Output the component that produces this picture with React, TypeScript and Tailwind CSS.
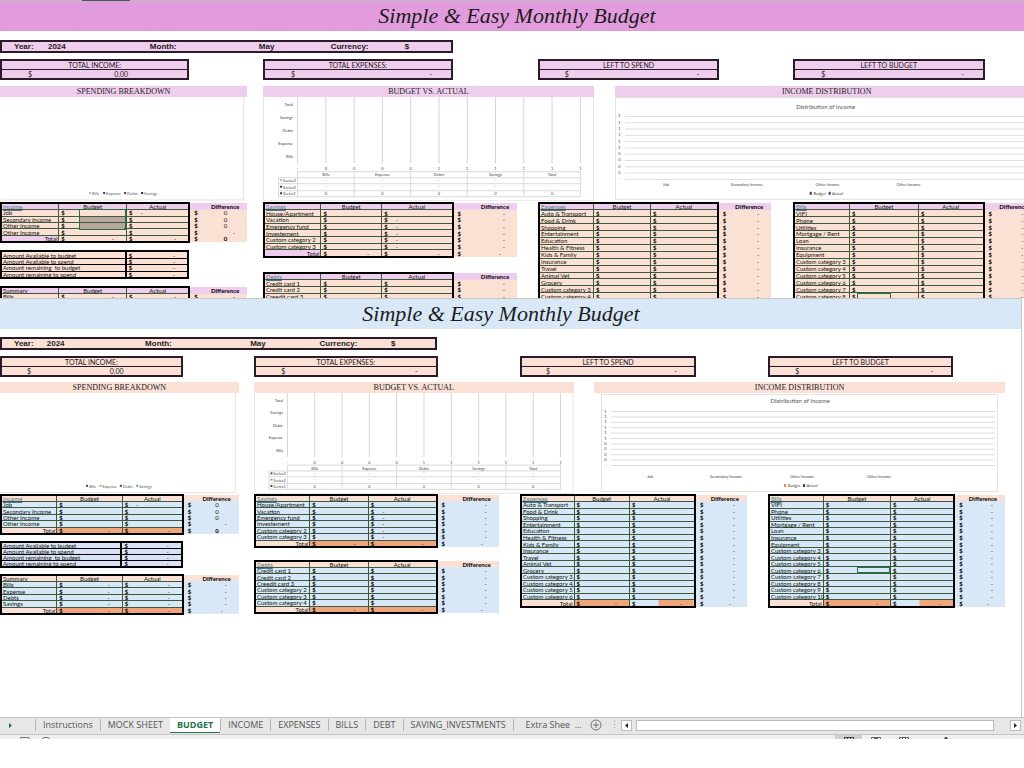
import { Fragment } from "react";
import clsx from "clsx";

type Theme = {
  head: string;
  body: string;
  diff: string;
  total: string;
  split: string;
  amount: string;
  dots: string[];
};

type Row = {
  name: string;
  budget?: string;
  actual?: string;
  left?: string;
  diff?: string;
};

const pink: Theme = {
  head: "bg-[#efcdec]",
  body: "bg-[#fbe1d4]",
  diff: "bg-[#fbe1d4]",
  total: "bg-[#fbe1d4]",
  split: "bg-[#fbe1d4]",
  amount: "bg-[#fbe1d4]",
  dots: ["#c9a3c8", "#5b2a5b", "#5b2a5b", "#2b1a3b"],
};

const blue: Theme = {
  head: "bg-[#fbe0d6]",
  body: "bg-[#d9e8f6]",
  diff: "bg-[#d9e8f6]",
  total: "bg-[#f0a67d]",
  split: "bg-[linear-gradient(90deg,#d9e8f6_45%,#f0a67d_45%)]",
  amount: "bg-[#d8e2f4]",
  dots: ["#1d5c4a", "#e08a50", "#1d4a5c", "#3a9ad0"],
};

const names = (list: string[]): Row[] => list.map((name) => ({ name }));

const income: Row[] = [
  { name: "Job", left: "-", diff: "0" },
  { name: "Secondary Income", diff: "0" },
  { name: "Other Income", diff: "0" },
  { name: "Other Income" },
];
const summary: Row[] = ["Bills", "Expense", "Debts", "Savings"].map((name) => ({ name, budget: "-", actual: "-" }));
const savings: Row[] = ["House/Apartment", "Vacation", "Emergency fund", "Investement", "Custom category 2", "Custom category 3"].map(
  (name, i) => ({ name, left: i > 0 ? "-" : "" })
);
const debts = names(["Credit card 1", "Credit card 2", "Creedit card 3", "Custom category 2", "Custom category 3", "Custom category 4"]);
const expenses = names([
  "Auto & Transport", "Food & Drink", "Shopping", "Entertainment", "Education", "Health & Fitness", "Kids & Family", "Insurance",
  "Travel", "Animal Vet", "Grocery", "Custom category 3", "Custom category 4", "Custom category 5", "Custom category 6",
]);
const bills = names([
  "VIFI", "Phone", "Utilities", "Mortgage / Rent", "Loan", "Insurance", "Equipment", "Custom category 3", "Custom category 4",
  "Custom category 5", "Custom category 6", "Custom category 7", "Custom category 8", "Custom category 9", "Custom category 10",
]);

const cols = {
  income: ["w-[23.5%]", "w-[27.5%]", "w-[25.5%]", "w-[23.5%]"],
  savings: ["w-[22.5%]", "w-[24%]", "w-[28%]", "w-[25.5%]"],
  expenses: ["w-[23.5%]", "w-[24.5%]", "w-[29%]", "w-[23%]"],
  bills: ["w-[23%]", "w-[28.5%]", "w-[27%]", "w-[21.5%]"],
};

const cell = "border border-[#3c5a40] p-0 whitespace-nowrap";

function Money({ value = "", left = "", className = "pl-0.5 pr-3" }: { value?: string; left?: string; className?: string }) {
  return (
    <div className={clsx("flex", className)}>
      <span className="font-black">$</span>
      {left && <span className="pl-2">{left}</span>}
      <span className="ml-auto">{value}</span>
    </div>
  );
}

// cursor: index of the row that carries the selection frame
function BudgetTable({
  title, rows, col, theme, height, link = true, split = false, total = "-", range = false, cursor = -1, open = false,
}: {
  title: string; rows: Row[]; col: string[]; theme: Theme; height: string;
  link?: boolean; split?: boolean; total?: string; range?: boolean; cursor?: number; open?: boolean;
}) {
  return (
    <table className={clsx("w-full table-fixed border-collapse text-[6px] leading-[5px] text-[#111]", height)}>
      <colgroup>
        {col.map((w, i) => <col key={i} className={w} />)}
      </colgroup>
      <thead>
        <tr className={theme.head}>
          <th className={clsx(cell, "border-t-2 border-l-2 border-t-black border-l-black text-left font-normal")}>
            {link ? <a href="#" className="pl-px text-[#4a7a8c] underline">{title}</a> : <span className="pl-px">{title}</span>}
          </th>
          <th className={clsx(cell, "border-t-2 border-t-black font-normal")}>Budget</th>
          <th className={clsx(cell, "border-t-2 border-r-2 border-t-black border-r-black font-normal")}>Actual</th>
          <th className="p-0 font-black"><div className="pr-2 text-right">Difference</div></th>
        </tr>
      </thead>
      <tbody>
        {rows.map((r, i) => (
          <tr key={i}>
            <td className={clsx(cell, theme.body, "border-l-2 border-l-black pl-px")}>{r.name}</td>
            <td className={clsx(cell, theme.body, i === cursor && "relative z-10")}>
              <Money value={r.budget} />
              {i === cursor && range && (
                <div className="absolute -top-px right-0 h-[21px] w-[70%] border border-[#217346] bg-[#fbe1d4]">
                  <div className="mt-[6px] h-[13px] border-t border-[#3c5a40] bg-[#b9a79c]">
                    <div className="h-[6px] border-b border-[#3c5a40]" />
                  </div>
                  <div className="absolute -right-px -bottom-px size-[2px] bg-[#217346]" />
                </div>
              )}
              {i === cursor && !range && (
                <div className={clsx("absolute inset-y-0 w-1/2 border border-[#217346]", open ? "left-[10%]" : "right-0")} />
              )}
            </td>
            <td className={clsx(cell, theme.body, "border-r-2 border-r-black")}><Money value={r.actual} left={r.left} /></td>
            <td className={clsx("p-0", theme.diff)}>
              <Money value={r.diff ?? "-"} className={r.diff ? "pl-1 pr-5" : "pl-1 pr-3"} />
            </td>
          </tr>
        ))}
        {!open && (
          <tr>
            <td className={clsx(cell, theme.head, "border-b-2 border-l-2 border-b-black border-l-black pr-px text-right")}>Total</td>
            <td className={clsx(cell, theme.total, "border-b-2 border-b-black")}><Money value="-" /></td>
            <td className={clsx(cell, "border-r-2 border-b-2 border-r-black border-b-black", split ? theme.split : theme.total)}>
              <Money value="-" />
            </td>
            <td className={clsx("p-0", theme.diff)}>
              <Money value={total} className={total === "0" ? "pl-1 pr-5 font-black" : "pl-1 pr-4"} />
            </td>
          </tr>
        )}
      </tbody>
    </table>
  );
}

function AmountTable({ theme, height }: { theme: Theme; height: string }) {
  return (
    <table className={clsx("w-[76.5%] table-fixed border-collapse border-2 border-black text-[6px] leading-[5px] text-[#111]", height, theme.amount)}>
      <tbody>
        {["Amount Available to budget", "Amount Available to spend", "Amount remaining  to budget", "Amount remaining to spend"].map((t) => (
          <tr key={t}>
            <td className="w-2/3 border border-r-2 border-black p-0 pl-px whitespace-pre">{t}</td>
            <td className="border border-black p-0"><Money value="-" /></td>
          </tr>
        ))}
      </tbody>
    </table>
  );
}

function TotalBox({ label, value, theme, className }: { label: string; value: string; theme: Theme; className: string }) {
  return (
    <div className={clsx("min-w-0 border-2 border-[#2a1a2a] font-[Lato,sans-serif] text-[7px] leading-[8px] text-[#222]", theme.head, className)}>
      <div className="border-b border-[#2a1a2a] text-center">{label}</div>
      <div className={clsx("flex justify-between pl-[14%]", value === "-" ? "pr-[10%]" : "pr-[32%]")}>
        <span>$</span>
        <span>{value}</span>
      </div>
    </div>
  );
}

function SectionTitle({ children, theme }: { children: string; theme: Theme }) {
  return (
    <h2 className={clsx("text-center font-['Liberation_Serif',serif] text-[8px] leading-[11px] text-[#222]", theme.head)}>{children}</h2>
  );
}

function SpendingChart({ theme, h }: { theme: Theme; h: number }) {
  return (
    <svg viewBox={`0 0 247 ${h}`} className="block w-full" fontSize="4" fill="#555">
      <path d={`M243.500 0V${h - 1}H0`} fill="none" stroke="#e2e2e2" />
      {["Bills", "Expense", "Debts", "Savings"].map((t, i) => (
        <g key={t}>
          <rect x={[89, 103, 124, 141][i]} y={h - 9} width="2" height="2" fill={theme.dots[i]} />
          <text x={[92, 106, 127, 144][i]} y={h - 6}>{t}</text>
        </g>
      ))}
    </svg>
  );
}

function BudgetChart({ theme }: { theme: Theme }) {
  const ticks = ["-", "0", "0", "0", "0", "1", "1", "1", "1", "1", "1"];
  const groups = ["Bills", "Expense", "Debts", "Savings", "Total"];
  return (
    <svg viewBox="0 0 330 104" className="block w-full" fontSize="4" fill="#444" textAnchor="middle">
      <path d="M.5 0V103.500H329.500V0" fill="none" stroke="#e6e6e6" />
      {ticks.map((t, i) => (
        <Fragment key={i}>
          <path d={`M${34.5 + i * 28.2} 0V66`} stroke="#d4d4d4" />
          <text x={34.5 + i * 28.2} y="73">{t}</text>
        </Fragment>
      ))}
      {[...groups].reverse().map((t, i) => (
        <text key={t} x="30" y={9 + i * 13} textAnchor="end">{t}</text>
      ))}
      <path d="M34.500 74.500H316.500M15.500 80.500H316.500M15.500 86.500H316.500M15.500 93.500H316.500M15.500 99.500H316.500M15.500 80.500V99.500" fill="none" stroke="#d9d9d9" />
      {[0, 1, 2, 3, 4, 5].map((i) => <path key={i} d={`M${34.5 + i * 56.4} 74V99.500`} stroke="#d9d9d9" />)}
      {groups.map((t, i) => (
        <Fragment key={t}>
          <text x={62.7 + i * 56.4} y="79">{t}</text>
          <text x={62.7 + i * 56.4} y="85">-</text>
          <text x={62.7 + i * 56.4} y="91">-</text>
          <text x={62.7 + i * 56.4} y="98">0</text>
        </Fragment>
      ))}
      {["Series3", "Series2", "Series1"].map((t, i) => (
        <Fragment key={t}>
          <rect x="17" y={82 + i * 6.5} width="2" height="2" fill={theme.dots[i]} />
          <text x="20" y={85 + i * 6.5} textAnchor="start">{t}</text>
        </Fragment>
      ))}
    </svg>
  );
}

type Plot = { w: number; h: number; title: number; top: number; step: number; label: number; legend: number; cats: number[]; mid: number };

function IncomeChart({ theme, plot }: { theme: Theme; plot: Plot }) {
  const marks = ["1", "1", "1", "1", "1", "1", "0", "0", "0", "0", "-"];
  return (
    <svg viewBox={`0 0 ${plot.w} ${plot.h}`} className="block w-full" fontSize="4" fill="#444" textAnchor="middle">
      <rect x=".5" y=".5" width={plot.w - 1} height={plot.h - 1} fill="none" stroke="#e2e2e2" />
      <text x={plot.mid} y={plot.title} fontSize="6" fill="#555">Distribution of Income</text>
      {marks.map((m, i) => (
        <Fragment key={i}>
          <path d={`M10 ${plot.top + i * plot.step}H${plot.w - 3}`} stroke="#dedede" />
          <text x="4.500" y={plot.top + 1 + i * plot.step}>{m}</text>
        </Fragment>
      ))}
      {["Job", "Secondary Income", "Other Income", "Other Income"].map((t, i) => (
        <text key={i} x={plot.cats[i]} y={plot.label}>{t}</text>
      ))}
      <rect x={plot.mid - 16} y={plot.legend - 3} width="2" height="3" fill={theme.dots[1]} />
      <text x={plot.mid - 6} y={plot.legend}>Budget</text>
      <rect x={plot.mid + 3} y={plot.legend - 3} width="2" height="3" fill={theme.dots[2]} />
      <text x={plot.mid + 12} y={plot.legend}>Actual</text>
    </svg>
  );
}

function YearBar({ theme, className }: { theme: Theme; className: string }) {
  return (
    <div
      className={clsx(
        "grid grid-cols-[34fr_102fr_109fr_72fr_74fr_46fr] border-2 border-[#2a1a2a] pl-3 font-['Liberation_Sans',sans-serif] text-[8px] leading-[9px] font-bold text-[#1c1c1c]",
        theme.head,
        className
      )}
    >
      {["Year:", "2024", "Month:", "May", "Currency:", "$"].map((t) => <span key={t}>{t}</span>)}
    </div>
  );
}

function SheetTabs() {
  const tabs = ["Instructions", "MOCK SHEET", "BUDGET", "INCOME", "EXPENSES", "BILLS", "DEBT", "SAVING_INVESTMENTS"];
  return (
    <div>
      <nav className="flex h-[18px] items-center border-y border-[#c4c4c4] bg-[#e7e7e7] pb-px font-['Open_Sans',sans-serif] text-[9px] leading-3 text-[#555]">
        <button aria-label="Next sheets" className="flex w-[35px] pl-[9px]">
          <svg viewBox="0 0 3 5" className="h-[5px] w-[3px]" fill="#1b7045"><path d="M0 0L3 2.500L0 5Z" /></svg>
        </button>
        {tabs.map((t) => (
          <button
            key={t}
            className={clsx(
              "px-[7px] whitespace-nowrap",
              t === "BUDGET" ? "h-[15px] border-b border-[#217346] bg-white font-bold text-[#217346]" : "border-l border-[#b5b5b5]"
            )}
          >
            {t}
          </button>
        ))}
        <button className="border-l border-[#b5b5b5] pr-2 pl-3 whitespace-nowrap">Extra Shee&nbsp; ...</button>
        <button aria-label="New sheet" className="mr-2">
          <svg viewBox="0 0 12 12" className="size-3" fill="none" stroke="#777"><circle cx="6" cy="6" r="5" /><path d="M6 3V9M3 6H9" /></svg>
        </button>
        <span className="mr-0.5 text-[#999]">⋮</span>
        <button aria-label="Scroll left" className="mr-1 flex size-[11px] items-center justify-center border border-[#bbb] bg-white">
          <svg viewBox="0 0 3 5" className="h-[5px] w-[3px]" fill="#222"><path d="M3 0L0 2.500L3 5Z" /></svg>
        </button>
        <div className="mr-4 h-[11px] grow border border-[#bbb] bg-white" />
        <button aria-label="Scroll right" className="mr-[3px] flex size-[11px] items-center justify-center border border-[#bbb] bg-white">
          <svg viewBox="0 0 3 5" className="h-[5px] w-[3px]" fill="#222"><path d="M0 0L3 2.500L0 5Z" /></svg>
        </button>
      </nav>
      <div className="flex h-1 items-end bg-[#f1f0ef] pr-[76px] pl-5">
        <svg viewBox="0 0 32 2" className="h-[2px] w-8" fill="none" stroke="#777"><path d="M0 2V.5H9V2M22 2L24 .5H28L30 2" /></svg>
        <div className="ml-auto flex h-1 w-[27px] items-end justify-center bg-[#cfcfcf]">
          <svg viewBox="0 0 10 2" className="h-[2px] w-[10px]" stroke="#444"><path d="M0 .5H10M.5 0V2M3.500 0V2M6.500 0V2M9.500 0V2" /></svg>
        </div>
        <svg viewBox="0 0 10 2" className="ml-[9px] h-[2px] w-[10px]" fill="none" stroke="#666"><path d="M.5 2V.5H9.500V2M3 1.500H7" /></svg>
        <svg viewBox="0 0 10 2" className="ml-[18px] h-[2px] w-[10px]" fill="none" stroke="#555"><path d="M.5 2V.5H9.500V2M3.500 0V2M6.500 0V2" /></svg>
        <svg viewBox="0 0 4 2" className="ml-[35px] h-[2px] w-1" fill="#555"><path d="M0 2L1 0H3L4 2Z" /></svg>
      </div>
    </div>
  );
}

const title = "text-center font-['Liberation_Serif',serif] text-[22px] leading-[30px] italic text-[#1c1c1c]";

export default function App() {
  return (
    <main className="overflow-hidden bg-white font-[Lato,sans-serif]">
      <section className="overflow-hidden">
        <div className="h-px bg-[#bdbdbd] pl-[8%]"><div className="h-px w-12 bg-[#3d5c4c]" /></div>
        <h1 className={clsx(title, "bg-[#e29cdd] pl-[10px]")}>Simple &amp; Easy Monthly Budget</h1>
        <YearBar theme={pink} className="mt-[9px] w-[44.2%]" />
        <div className="mt-[6px] grid grid-cols-[263fr_275fr_255fr_231fr]">
          <TotalBox label="TOTAL INCOME:" value="0.00" theme={pink} className="w-[72%]" />
          <TotalBox label="TOTAL EXPENSES:" value="-" theme={pink} className="w-[69%]" />
          <TotalBox label="LEFT TO SPEND" value="-" theme={pink} className="w-[71%]" />
          <TotalBox label="LEFT TO BUDGET" value="-" theme={pink} className="w-[83%]" />
        </div>
        <div className="mt-[6px] grid grid-cols-[263fr_352fr_409fr]">
          <div className="w-[94%] min-w-0">
            <SectionTitle theme={pink}>SPENDING BREAKDOWN</SectionTitle>
            <SpendingChart theme={pink} h={104} />
          </div>
          <div className="w-[94%] min-w-0">
            <SectionTitle theme={pink}>BUDGET VS. ACTUAL</SectionTitle>
            <BudgetChart theme={pink} />
          </div>
          <div className="w-[103.5%] min-w-0">
            <SectionTitle theme={pink}>INCOME DISTRIBUTION</SectionTitle>
            <IncomeChart
              theme={pink}
              plot={{ w: 424, h: 103, title: 12, top: 19.5, step: 6.3, label: 89, legend: 98, cats: [51, 132, 213, 294], mid: 211 }}
            />
          </div>
        </div>
        <div className="mt-px grid max-h-24 grid-cols-[263fr_275fr_255fr_231fr] items-start overflow-hidden">
          <div className="flex w-[94%] min-w-0 flex-col gap-[7px]">
            <BudgetTable title="Income" rows={income} col={cols.income} theme={pink} height="h-[41px]" total="0" range cursor={0} />
            <AmountTable theme={pink} height="h-[29px]" />
            <BudgetTable title="Summary" rows={summary.slice(0, 1)} col={cols.income} theme={pink} height="h-[14px]" link={false} open />
          </div>
          <div className="flex w-[92.4%] min-w-0 flex-col gap-[14px]">
            <BudgetTable title="Savings" rows={savings} col={cols.savings} theme={pink} height="h-[56px]" />
            <BudgetTable title="Debts" rows={debts.slice(0, 3)} col={cols.savings} theme={pink} height="h-[28px]" open />
          </div>
          <div className="w-[91.5%] min-w-0">
            <BudgetTable title="Expenses" rows={expenses.slice(0, 13)} col={cols.expenses} theme={pink} height="h-[98px]" open />
          </div>
          <div className="w-[105%] min-w-0">
            <BudgetTable title="Bills" rows={bills.slice(0, 13)} col={cols.bills} theme={pink} height="h-[98px]" cursor={12} open />
          </div>
        </div>
      </section>

      <section className="mr-[2px] border-t border-r border-[#c8c8c8] pb-[102px]">
        <h1 className={clsx(title, "bg-[#d9e8f6] pr-[19px]")}>Simple &amp; Easy Monthly Budget</h1>
        <div className="mr-[-3px]">
          <YearBar theme={blue} className="mt-2 w-[42.7%]" />
          <div className="mt-[6px] grid grid-cols-[254fr_266fr_248fr_256fr]">
            <TotalBox label="TOTAL INCOME:" value="0.00" theme={blue} className="w-[72%]" />
            <TotalBox label="TOTAL EXPENSES:" value="-" theme={blue} className="w-[69%]" />
            <TotalBox label="LEFT TO SPEND" value="-" theme={blue} className="w-[71%]" />
            <TotalBox label="LEFT TO BUDGET" value="-" theme={blue} className="w-[72.3%]" />
          </div>
          <div className="mt-[5px] grid grid-cols-[254fr_340fr_430fr]">
            <div className="w-[94%] min-w-0">
              <SectionTitle theme={blue}>SPENDING BREAKDOWN</SectionTitle>
              <SpendingChart theme={blue} h={104} />
            </div>
            <div className="w-[94%] min-w-0">
              <SectionTitle theme={blue}>BUDGET VS. ACTUAL</SectionTitle>
              <BudgetChart theme={blue} />
            </div>
            <div className="w-[95.6%] min-w-0">
              <SectionTitle theme={blue}>INCOME DISTRIBUTION</SectionTitle>
              <div className="px-[7px] pt-px">
                <IncomeChart
                  theme={blue}
                  plot={{ w: 397, h: 98, title: 9, top: 17.5, step: 5.4, label: 84, legend: 93, cats: [49, 125, 201, 278], mid: 199 }}
                />
              </div>
            </div>
          </div>
          <div className="grid grid-cols-[254fr_266fr_248fr_256fr] items-start">
            <div className="flex w-[94%] min-w-0 flex-col gap-[6px]">
              <BudgetTable title="Income" rows={income} col={cols.income} theme={blue} height="h-[41px]" total="0" />
              <AmountTable theme={blue} height="h-[27px]" />
              <BudgetTable title="Summary" rows={summary} col={cols.income} theme={blue} height="h-[41px]" link={false} />
            </div>
            <div className="flex w-[92%] min-w-0 flex-col gap-3">
              <BudgetTable title="Savings" rows={savings} col={cols.savings} theme={blue} height="h-[54px]" />
              <BudgetTable title="Debts" rows={debts} col={cols.savings} theme={blue} height="h-[54px]" />
            </div>
            <div className="w-[91.5%] min-w-0">
              <BudgetTable title="Expenses" rows={expenses} col={cols.expenses} theme={blue} height="h-[114px]" split />
            </div>
            <div className="w-[92.6%] min-w-0">
              <BudgetTable title="Bills" rows={bills} col={cols.bills} theme={blue} height="h-[114px]" split cursor={10} />
            </div>
          </div>
        </div>
      </section>
      <SheetTabs />
    </main>
  );
}
